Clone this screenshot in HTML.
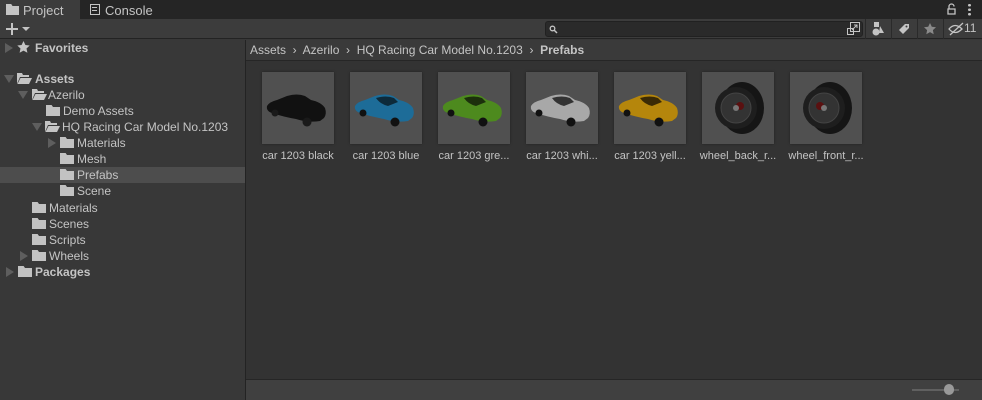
<!DOCTYPE html>
<html><head><style>
*{margin:0;padding:0;box-sizing:border-box}
body{width:982px;height:400px;background:#383838;font-family:"Liberation Sans",sans-serif;font-size:12px;color:#c4c4c4;position:relative;overflow:hidden}
.a{position:absolute}
.row{position:absolute;height:16px;line-height:16px;white-space:nowrap}
.fold{display:inline-block;width:14px;height:11px;background:#c2c2c2;vertical-align:-1px;margin-right:3px;clip-path:polygon(0 0,40% 0,50% 18%,100% 18%,100% 100%,0 100%)}
.tri{position:absolute;width:0;height:0}
.tr{border-top:5px solid transparent;border-bottom:5px solid transparent;border-left:8px solid #5e5e5e}
.td{border-left:5px solid transparent;border-right:5px solid transparent;border-top:8px solid #5e5e5e}
.th{position:absolute;top:72px;width:72px;height:72px;background:#505050;box-shadow:0 0 2px #222}
.lb{position:absolute;top:150px;width:88px;text-align:center;font-size:11px;color:#c4c4c4}
.sep{position:absolute;top:19px;width:1px;height:20px;background:#2a2a2a}
</style></head><body>
<div class="a" style="left:0;top:0;width:982px;height:19px;background:#252525"></div>
<div class="a" style="left:0;top:0;width:80px;height:19px;background:#3c3c3c"></div>
<div class="a" style="left:6px;top:4px;width:13px;height:11px;background:#c4c4c4;clip-path:polygon(0 0,40% 0,50% 18%,100% 18%,100% 100%,0 100%)"></div>
<div class="a" style="left:23px;top:3px;font-size:13px;color:#c4c4c4">Project</div>
<div class="a" style="left:90px;top:4px;width:10px;height:11px;border:1.5px solid #c4c4c4;background:linear-gradient(#c4c4c4,#c4c4c4) 1px 2px/5px 1px no-repeat,linear-gradient(#c4c4c4,#c4c4c4) 1px 5px/5px 1px no-repeat"></div>
<div class="a" style="left:105px;top:3px;font-size:13px;color:#c4c4c4">Console</div>
<svg class="a" style="left:945px;top:3px" width="12" height="12"><path d="M3 6h7v5H3z" fill="none" stroke="#c4c4c4" stroke-width="1.3"/><path d="M4 6V3.5a2.5 2.5 0 0 1 5 0" fill="none" stroke="#c4c4c4" stroke-width="1.3"/></svg>
<div class="a" style="left:968px;top:3px;width:3px;height:13px;background:radial-gradient(circle,#c4c4c4 1.3px,transparent 1.5px) 0 0/3px 4.5px"></div>
<div class="a" style="left:0;top:19px;width:982px;height:20px;background:#3c3c3c;border-bottom:1px solid #232323"></div>
<div class="a" style="left:6px;top:28px;width:12px;height:2px;background:#c4c4c4"></div>
<div class="a" style="left:11px;top:23px;width:2px;height:12px;background:#c4c4c4"></div>
<div class="tri td" style="left:22px;top:27px;border-width:4px 4px 0;border-top-color:#c4c4c4"></div>
<div class="a" style="left:545px;top:21px;width:318px;height:16px;background:#2a2a2a;border:1px solid #212121;border-radius:3px"></div>
<svg class="a" style="left:549px;top:25px" width="9" height="9"><circle cx="3.5" cy="3.5" r="2.3" fill="none" stroke="#c4c4c4" stroke-width="1.3"/><path d="M5 5l3 3" stroke="#c4c4c4" stroke-width="1.5"/></svg>
<svg class="a" style="left:847px;top:22px" width="13" height="13"><rect x="0.5" y="6.5" width="6" height="6" fill="none" stroke="#c4c4c4"/><rect x="3.5" y="0.5" width="9" height="9" fill="none" stroke="#c4c4c4"/><path d="M5 8l5-5M7 3h3v3" fill="none" stroke="#c4c4c4"/></svg>
<div class="sep" style="left:865px"></div><div class="sep" style="left:891px"></div><div class="sep" style="left:917px"></div><div class="sep" style="left:943px"></div>
<svg class="a" style="left:871px;top:22px" width="16" height="14"><rect x="3" y="0" width="5" height="5" fill="#c4c4c4"/><circle cx="5" cy="10" r="3.5" fill="#c4c4c4"/><path d="M9 4l4 7H8z" fill="#c4c4c4"/></svg>
<svg class="a" style="left:898px;top:23px" width="12" height="12"><path d="M1 7L7 1h4v4l-6 6z" fill="#c4c4c4"/><circle cx="8.5" cy="3.5" r="1" fill="#3c3c3c"/></svg>
<svg class="a" style="left:924px;top:23px" width="12" height="12"><path d="M6 0l1.8 3.8 4.2.5-3.1 2.8.8 4.1L6 9.1 2.3 11.2l.8-4.1L0 4.3l4.2-.5z" fill="#8a8a8a"/></svg>
<svg class="a" style="left:948px;top:22px" width="16" height="14"><path d="M1 7q6-7 13 0q-7 7-13 0z" fill="none" stroke="#c4c4c4" stroke-width="1.3"/><path d="M2 13L15 1" stroke="#c4c4c4" stroke-width="1.3"/></svg>
<div class="a" style="left:964px;top:21px;font-size:12px;color:#c4c4c4">11</div>
<div class="a" style="left:245px;top:40px;width:1px;height:360px;background:#232323"></div>
<div class="tri tr" style="left:5px;top:43px"></div>
<svg class="a" style="left:17px;top:41px" width="13" height="13"><path d="M6.5 0l1.9 4 4.3.5-3.2 3 .9 4.3-3.9-2.2-3.9 2.2.9-4.3-3.2-3 4.3-.5z" fill="#c4c4c4"/></svg>
<div class="row" style="left:35px;top:40px;font-weight:bold">Favorites</div>
<div class="tri td" style="left:4px;top:75px"></div>
<svg class="a" style="left:17px;top:73px" width="15" height="11"><path d="M0 0h5l1 2h6v2H3L0 11z" fill="#c4c4c4"/><path d="M3.5 5H15l-3 6H0.5z" fill="#c4c4c4"/></svg>
<div class="row" style="left:35px;top:71px;font-weight:bold">Assets</div>
<div class="tri td" style="left:18px;top:91px"></div>
<svg class="a" style="left:32px;top:89px" width="15" height="11"><path d="M0 0h5l1 2h6v2H3L0 11z" fill="#c4c4c4"/><path d="M3.5 5H15l-3 6H0.5z" fill="#c4c4c4"/></svg>
<div class="row" style="left:48px;top:87px">Azerilo</div>
<div class="row" style="left:46px;top:103px"><span class="fold"></span>Demo Assets</div>
<div class="tri td" style="left:32px;top:123px"></div>
<svg class="a" style="left:45px;top:121px" width="15" height="11"><path d="M0 0h5l1 2h6v2H3L0 11z" fill="#c4c4c4"/><path d="M3.5 5H15l-3 6H0.5z" fill="#c4c4c4"/></svg>
<div class="row" style="left:62px;top:119px">HQ Racing Car Model No.1203</div>
<div class="tri tr" style="left:48px;top:138px"></div>
<div class="row" style="left:60px;top:135px"><span class="fold"></span>Materials</div>
<div class="row" style="left:60px;top:151px"><span class="fold"></span>Mesh</div>
<div class="a" style="left:0;top:167px;width:245px;height:16px;background:#4d4d4d"></div>
<div class="row" style="left:60px;top:167px"><span class="fold"></span>Prefabs</div>
<div class="row" style="left:60px;top:183px"><span class="fold"></span>Scene</div>
<div class="row" style="left:32px;top:200px"><span class="fold"></span>Materials</div>
<div class="row" style="left:32px;top:216px"><span class="fold"></span>Scenes</div>
<div class="row" style="left:32px;top:232px"><span class="fold"></span>Scripts</div>
<div class="tri tr" style="left:20px;top:251px"></div>
<div class="row" style="left:32px;top:248px"><span class="fold"></span>Wheels</div>
<div class="tri tr" style="left:6px;top:267px"></div>
<div class="row" style="left:18px;top:264px;font-weight:bold"><span class="fold"></span>Packages</div>
<div class="a" style="left:246px;top:40px;width:736px;height:21px;background:#3a3a3a;border-bottom:1px solid #262626"></div>
<div class="a" style="left:250px;top:43px;color:#c4c4c4;word-spacing:0">Assets &nbsp;&#x203A;&nbsp; Azerilo &nbsp;&#x203A;&nbsp; HQ Racing Car Model No.1203 &nbsp;&#x203A;&nbsp; <b>Prefabs</b></div>
<div class="a" style="left:246px;top:61px;width:736px;height:318px;background:#333333"></div>
<div class="a" style="left:246px;top:379px;width:736px;height:21px;background:#404040;border-top:1px solid #262626"></div>
<div class="a" style="left:912px;top:389px;width:47px;height:2px;background:#606060"></div>
<div class="a" style="left:944px;top:384px;width:10px;height:11px;border-radius:5px;background:#999"></div>

<svg width="0" height="0" style="position:absolute"><defs>
<path id="car" d="M5 34q2-4 10-6l10-4q10-3 18 0l6 4q10 2 14 8q2 6-1 10l-4 3q-12 2-24-2q-12-2-24-6q-6-2-5-7z"/>
</defs></svg>
<div class="th" style="left:262px"><svg width="72" height="72"><use href="#car" fill="#111"/><circle cx="13" cy="41" r="3.5" fill="#1a1a1a"/><circle cx="45" cy="50" r="4.5" fill="#1a1a1a"/></svg></div>
<div class="th" style="left:350px"><svg width="72" height="72"><use href="#car" fill="#1d6c98"/><path d="M26 26q10-3 18 0l4 4-10 4q-8-2-12-8z" fill="#0d2a3a"/><circle cx="13" cy="41" r="3.5" fill="#111"/><circle cx="45" cy="50" r="4.5" fill="#111"/></svg></div>
<div class="th" style="left:438px"><svg width="72" height="72"><use href="#car" fill="#4d8a1e"/><path d="M26 26q10-3 18 0l4 4-10 4q-8-2-12-8z" fill="#1c300c"/><circle cx="13" cy="41" r="3.5" fill="#111"/><circle cx="45" cy="50" r="4.5" fill="#111"/></svg></div>
<div class="th" style="left:526px"><svg width="72" height="72"><use href="#car" fill="#a8a8a8"/><path d="M26 26q10-3 18 0l4 4-10 4q-8-2-12-8z" fill="#333"/><circle cx="13" cy="41" r="3.5" fill="#111"/><circle cx="45" cy="50" r="4.5" fill="#111"/></svg></div>
<div class="th" style="left:614px"><svg width="72" height="72"><use href="#car" fill="#b5860c"/><path d="M26 26q10-3 18 0l4 4-10 4q-8-2-12-8z" fill="#3a2a05"/><circle cx="13" cy="41" r="3.5" fill="#111"/><circle cx="45" cy="50" r="4.5" fill="#111"/></svg></div>
<div class="th" style="left:702px"><svg width="72" height="72"><ellipse cx="40" cy="36" rx="22" ry="26" fill="#151515"/><circle cx="34" cy="36" r="21" fill="#1e1e1e"/><circle cx="34" cy="36" r="15" fill="#333" stroke="#444"/><circle cx="38" cy="34" r="4" fill="#5a1010"/><circle cx="34" cy="36" r="3" fill="#777"/></svg></div>
<div class="th" style="left:790px"><svg width="72" height="72"><ellipse cx="40" cy="36" rx="22" ry="26" fill="#151515"/><circle cx="34" cy="36" r="21" fill="#1e1e1e"/><circle cx="34" cy="36" r="15" fill="#333" stroke="#444"/><circle cx="30" cy="34" r="4" fill="#5a1010"/><circle cx="34" cy="36" r="3" fill="#777"/></svg></div>
<div class="lb" style="left:254px">car 1203 black</div>
<div class="lb" style="left:342px">car 1203 blue</div>
<div class="lb" style="left:430px">car 1203 gre...</div>
<div class="lb" style="left:518px">car 1203 whi...</div>
<div class="lb" style="left:606px">car 1203 yell...</div>
<div class="lb" style="left:694px">wheel_back_r...</div>
<div class="lb" style="left:782px">wheel_front_r...</div>
</body></html>
